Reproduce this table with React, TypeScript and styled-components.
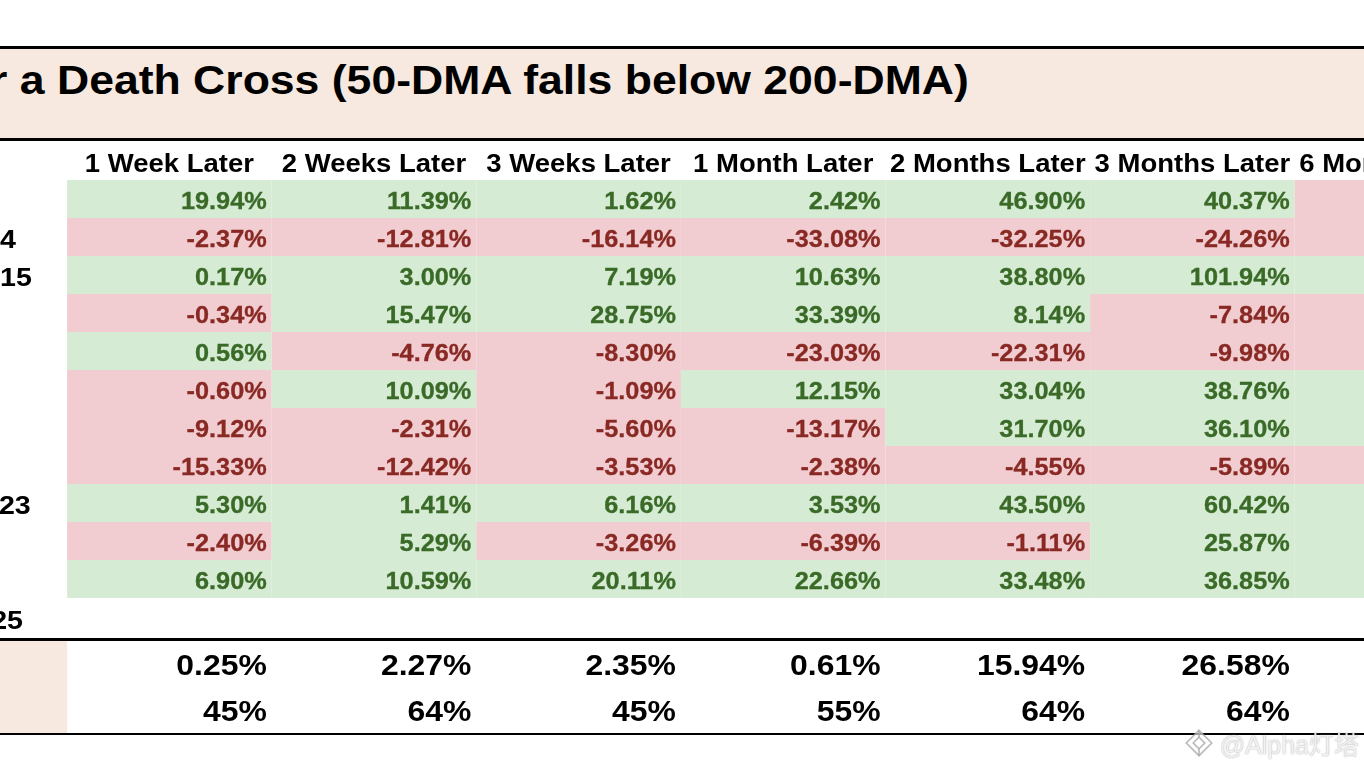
import React from 'react';
import styled, { createGlobalStyle } from 'styled-components';

type Tone = 'g' | 'r';

const GlobalStyle = createGlobalStyle`
  html, body {
    margin: 0;
    padding: 0;
    background: #fff;
    overflow: hidden;
  }
  body {
    font-family: "Liberation Sans", Arial, Helvetica, sans-serif;
  }
`;

const COLS = '61px repeat(7, 186px)';

const Page = styled.div`
  position: relative;
  width: 1364px;
  height: 766px;
  overflow: hidden;
  background: #fff;
  padding-top: 46px;
  box-sizing: border-box;
`;

// the sheet in the screenshot is stretched a little sideways
const Sheet = styled.div`
  width: 1362px;
  transform: scaleX(1.1);
  transform-origin: left top;
  font-weight: 700;
  color: #000;
`;

const TitleBand = styled.div`
  height: 89px;
  border-top: 3px solid #000;
  border-bottom: 3px solid #000;
  background: #f7e9df;
  overflow: hidden;
`;

const Title = styled.div`
  font-size: 40.5px;
  line-height: 48px;
  padding-top: 7px;
  margin-left: -9px;
  white-space: nowrap;
`;

const Row = styled.div<{ $h: number }>`
  display: grid;
  grid-template-columns: ${COLS};
  height: ${(p) => p.$h}px;
`;

const HeadCell = styled.div`
  display: flex;
  align-items: center;
  justify-content: center;
  padding-top: 6px;
  font-size: 25px;
  white-space: nowrap;
`;

const Label = styled.div<{ $shift: number }>`
  display: flex;
  align-items: center;
  padding-top: 4px;
  margin-left: ${(p) => p.$shift}px;
  font-size: 26px;
  white-space: nowrap;
`;

const Cell = styled.div<{ $tone: Tone }>`
  display: flex;
  align-items: center;
  justify-content: flex-end;
  padding: 5px 4.5px 0 0;
  font-size: 23px;
  white-space: nowrap;
  -webkit-text-stroke: 0.3px currentColor;
  background: ${(p) => (p.$tone === 'g' ? '#d6ebd3' : '#f1cdd1')};
  color: ${(p) => (p.$tone === 'g' ? '#3a6a27' : '#892924')};
`;

const Summary = styled.div`
  border-top: 3px solid #000;
  border-bottom: 2px solid #000;
  display: grid;
  grid-template-columns: ${COLS};
  grid-template-rows: 46px 46px;
`;

const SumLabel = styled.div`
  grid-row: 1 / span 2;
  background: #f7e9df;
`;

const SumCell = styled.div`
  display: flex;
  align-items: center;
  justify-content: flex-end;
  padding: 2px 4.5px 0 0;
  font-size: 29px;
  white-space: nowrap;
`;

const Watermark = styled.div`
  position: absolute;
  right: 5px;
  top: 725px;
  display: flex;
  align-items: center;
  gap: 6px;
  font-family: "Liberation Sans", "Noto Sans CJK SC", sans-serif;
  font-size: 25px;
  color: rgba(255, 255, 255, 0.85);
  text-shadow: 0 0 1px rgba(110, 110, 110, 0.6), 0 0 2px rgba(150, 150, 150, 0.4);
  white-space: nowrap;
`;

const headers = [
  '1 Week Later',
  '2 Weeks Later',
  '3 Weeks Later',
  '1 Month Later',
  '2 Months Later',
  '3 Months Later',
  '6 Months Later',
];

const rows: { label?: string; shift?: number; tones: string; values: string[] }[] = [
  { tones: 'gggggggr', values: ['19.94%', '11.39%', '1.62%', '2.42%', '46.90%', '40.37%'] },
  { label: '4', shift: 0, tones: 'rrrrrrr', values: ['-2.37%', '-12.81%', '-16.14%', '-33.08%', '-32.25%', '-24.26%'] },
  { label: '15', shift: 0, tones: 'ggggggg', values: ['0.17%', '3.00%', '7.19%', '10.63%', '38.80%', '101.94%'] },
  { tones: 'rggggrr', values: ['-0.34%', '15.47%', '28.75%', '33.39%', '8.14%', '-7.84%'] },
  { tones: 'grrrrrr', values: ['0.56%', '-4.76%', '-8.30%', '-23.03%', '-22.31%', '-9.98%'] },
  { tones: 'rgrgggg', values: ['-0.60%', '10.09%', '-1.09%', '12.15%', '33.04%', '38.76%'] },
  { tones: 'rrrrggg', values: ['-9.12%', '-2.31%', '-5.60%', '-13.17%', '31.70%', '36.10%'] },
  { tones: 'rrrrrrr', values: ['-15.33%', '-12.42%', '-3.53%', '-2.38%', '-4.55%', '-5.89%'] },
  { label: '23', shift: -1, tones: 'ggggggg', values: ['5.30%', '1.41%', '6.16%', '3.53%', '43.50%', '60.42%'] },
  { tones: 'rgrrrgg', values: ['-2.40%', '5.29%', '-3.26%', '-6.39%', '-1.11%', '25.87%'] },
  { tones: 'ggggggg', values: ['6.90%', '10.59%', '20.11%', '22.66%', '33.48%', '36.85%'] },
];

const averages = ['0.25%', '2.27%', '2.35%', '0.61%', '15.94%', '26.58%'];
const winRates = ['45%', '64%', '45%', '55%', '64%', '64%'];

const toneAt = (tones: string, i: number): Tone => (tones[i] === 'g' ? 'g' : 'r');

const WatermarkLogo = () => (
  <svg width="30" height="30" viewBox="0 0 26 26" fill="none" stroke="rgba(165,165,165,0.75)" strokeWidth="1.5">
    <path d="M13 2 L24 13 L13 24 L2 13 Z" fill="rgba(255,255,255,0.6)" />
    <path d="M8 13 L13 8 L18 13 L13 18 Z" />
    <path d="M13 2 L13 8 M13 18 L13 24" />
  </svg>
);

export default function App() {
  return (
    <Page>
      <GlobalStyle />
      <Sheet>
        <TitleBand>
          <Title>r a Death Cross (50-DMA falls below 200-DMA)</Title>
        </TitleBand>

        <Row $h={39}>
          <div />
          {headers.map((h) => (
            <HeadCell key={h}>{h}</HeadCell>
          ))}
        </Row>

        {rows.map((r, ri) => (
          <Row $h={38} key={ri}>
            <Label $shift={r.shift ?? 0}>{r.label ?? ''}</Label>
            {r.values.map((v, ci) => (
              <Cell key={ci} $tone={toneAt(r.tones, ci)}>{v}</Cell>
            ))}
            <Cell $tone={toneAt(r.tones, r.tones.length - 1)} />
          </Row>
        ))}

        <Row $h={40}>
          <Label $shift={-8}>25</Label>
        </Row>

        <Summary>
          <SumLabel />
          {averages.map((v, i) => (
            <SumCell key={`a${i}`}>{v}</SumCell>
          ))}
          <SumCell />
          {winRates.map((v, i) => (
            <SumCell key={`w${i}`}>{v}</SumCell>
          ))}
          <SumCell />
        </Summary>
      </Sheet>

      <Watermark>
        <WatermarkLogo />
        <span>@Alpha灯塔</span>
      </Watermark>
    </Page>
  );
}
